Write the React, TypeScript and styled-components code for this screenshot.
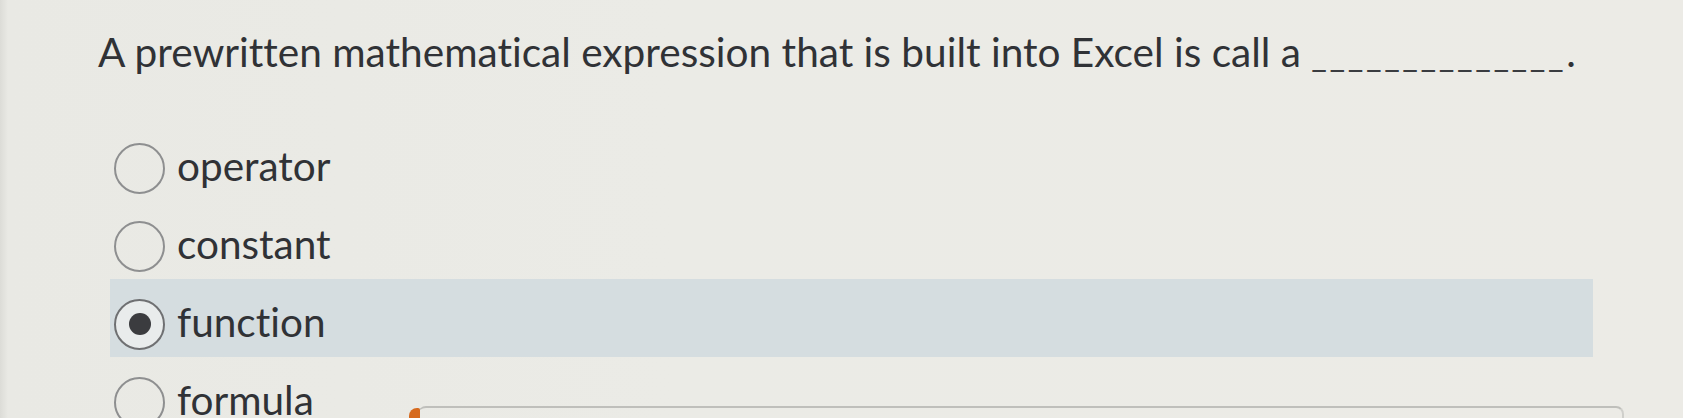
import styled, { createGlobalStyle } from "styled-components";

const GlobalStyle = createGlobalStyle`
  html, body {
    margin: 0;
    padding: 0;
    background: #eaeae5;
    overflow: hidden;
  }
  body {
    font-family: Lato, "Open Sans", sans-serif;
    font-variant-ligatures: none;
    color: #303236;
  }
`;

const answers = ["operator", "constant", "function", "formula"];
const selected = "function";

const App = () => {
  return (
    <>
      <GlobalStyle />
      <Page>
        <Question>
          A prewritten mathematical expression that is built into Excel is call a{" "}
          <Blank>______________</Blank>.
        </Question>
        <Answers>
          {answers.map((answer) => (
            <Answer key={answer} isSelected={answer === selected}>
              <Radio isSelected={answer === selected} />
              <Label>{answer}</Label>
            </Answer>
          ))}
        </Answers>
        <NextBox>
          <Accent />
        </NextBox>
      </Page>
    </>
  );
};

const Page = styled.div`
  width: 1683px;
  height: 418px;
  box-sizing: border-box;
  padding: 26px 0 0 110px;
  overflow: hidden;
  background: linear-gradient(90deg, #dcdcd7 0px, #e9e9e4 8px, #ebebe6 40%, #ecebe6 100%);
`;

const Question = styled.div`
  font-size: 40.6px;
  line-height: 52px;
  margin-left: -12px;
  white-space: nowrap;
`;

const Blank = styled.span`
  color: #3a3c40;
  font-size: 34px;
  letter-spacing: 2.6px;
`;

const Answers = styled.div`
  display: flex;
  flex-direction: column;
  width: 1483px;
  margin-top: 43px;
`;

const Answer = styled.div<{ isSelected: boolean }>`
  display: flex;
  align-items: center;
  height: 78px;
  box-sizing: border-box;
  padding: 12px 0 0 4px;
  gap: 12px;
  background: ${({ isSelected }) => (isSelected ? "#d5dde0" : "transparent")};
`;

const Radio = styled.span<{ isSelected: boolean }>`
  position: relative;
  flex: none;
  width: 47px;
  height: 47px;
  border-radius: 50%;
  border: 2px solid ${({ isSelected }) => (isSelected ? "#6f7072" : "#8e8f90")};
  background: ${({ isSelected }) => (isSelected ? "#e9ecec" : "transparent")};
  &::after {
    content: "";
    display: ${({ isSelected }) => (isSelected ? "block" : "none")};
    position: absolute;
    left: 50%;
    top: 50%;
    width: 22px;
    height: 22px;
    margin: -11px 0 0 -11px;
    border-radius: 50%;
    background: #3b3c3f;
  }
`;

const Label = styled.span`
  font-size: 40.5px;
  line-height: 46px;
  padding-bottom: 4px;
`;

const NextBox = styled.div`
  position: relative;
  margin: -29px 0 0 308px;
  width: 1204px;
  height: 40px;
  border-top: 2px solid #bfbfbb;
  border-right: 2px solid #cfcfcb;
  border-radius: 8px 8px 0 0;
`;

const Accent = styled.span`
  position: absolute;
  left: -9px;
  top: 0;
  width: 11px;
  height: 16px;
  border-radius: 8px 2px 0 0;
  background: #d66a1e;
`;

export default App;
